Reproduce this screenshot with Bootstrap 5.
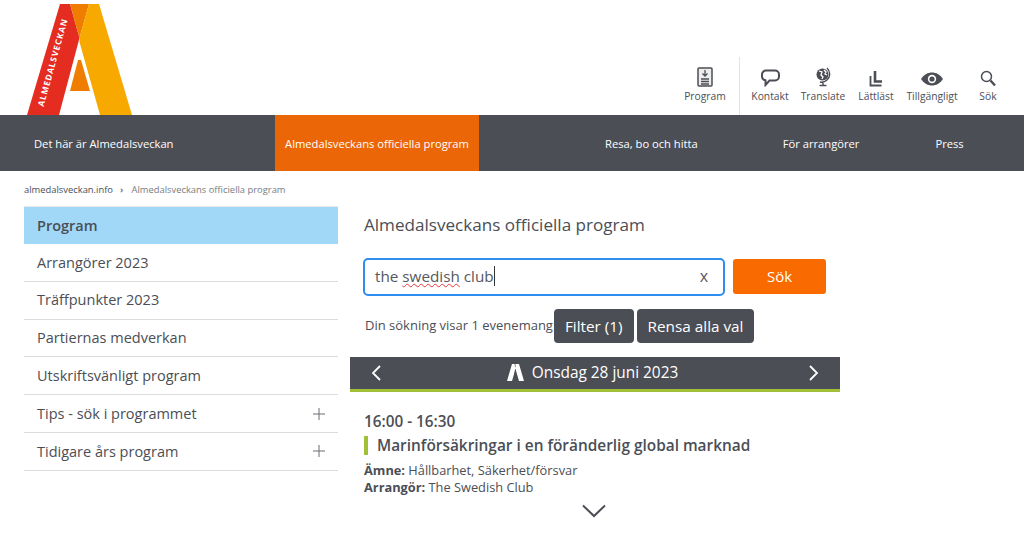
<!DOCTYPE html>
<html lang="sv">
<head>
<meta charset="utf-8">
<title>Almedalsveckans officiella program</title>
<link href="https://cdn.jsdelivr.net/npm/bootstrap@5.3.0/dist/css/bootstrap.min.css" rel="stylesheet">
<style>
html,body{height:554px;overflow:hidden}
body{font-family:"Open Sans",sans-serif;color:#4b4e55;background:#fff}
.site-top{height:115px}
.site-logo{margin-left:26px;margin-top:4px;width:108px;height:111px;display:block}
.tools{padding-right:27px;padding-top:57px}
.tool{font-size:10.3px;line-height:13px;color:#4b4e55;text-align:center;text-decoration:none;display:flex;flex-direction:column;align-items:center;justify-content:flex-end;padding-bottom:12px;white-space:nowrap}
.tool svg{margin-bottom:3px}
.t-prog{width:42px;margin-right:13px}
.t-sep{border-left:1px solid #e3e3e3;padding-left:11px}
.t-kont{width:38px;margin-right:11px}
.t-tran{width:46px;margin-right:11px}
.t-latt{width:38px;margin-right:11px}
.t-till{width:52px;margin-right:21px}
.t-sok{width:18px}
.mainnav{background:#4b4e55;height:56px}
.mainnav a{font-size:11.2px;color:#fff;text-decoration:none;display:flex;align-items:center;height:56px;padding-top:2px;white-space:nowrap}
.n1{width:275px;padding-left:34px}
.n2{width:204px;justify-content:center;background:#ea6607}
.n3{margin-left:126px}
.n4{margin-left:85px}
.n5{margin-left:76px}
.crumbs{font-size:9.4px;line-height:12px;padding:13px 0 0 24px;height:36px;color:#7a7c82}
.crumbs a{color:#4b4e55;text-decoration:none}
.crumbs b{font-weight:700;margin:0 8px 0 7px}
.side{width:314px;margin-left:24px;flex:none;margin-top:-1px}
.side-item{display:flex;justify-content:space-between;align-items:center;height:37.8px;padding:0 13px;font-size:14.5px;border-bottom:1px solid #dcdcdc;color:#4b4e55;text-decoration:none}
.side-item.on{background:#a1d8f7;font-weight:600;height:38px;border-bottom:0;border-top:1px solid #e8e8e8}
.content{width:490px;margin-left:12px;flex:none;margin-top:-1px}
.pad{padding-left:14px}
.ptitle{font-size:17.1px;line-height:22px;font-weight:400;margin:8px 0 22px;color:#4b4e55}
.searchbox{width:362px;height:38px;border:2px solid #2d8ef0;border-radius:5px;padding:0 10px;font-size:15.25px;line-height:33px;color:#55585e;display:flex;justify-content:space-between;margin-left:-1px}
.spell{text-decoration:underline wavy #e5353b 1px}
.caret-bar{border-right:1px solid #333}
.sx{font-size:16px;line-height:33px;padding-right:5px}
.btn-sok{width:93px;height:35px;background:#f96a00;color:#fff;font-size:15px;border:0;border-radius:3px;margin:0 0 1px 8px;padding:0}
.res{font-size:13px;margin:13px 0 14px 1px;height:34px;gap:3px}
.btn-dark2{background:#4b4e55;color:#fff;font-size:15.3px;height:34px;padding:0 11px;border:0;border-radius:4px}
.res .first{margin-left:-2px}
.datebar{height:35px;background:#4b4e55;border-bottom:3px solid #a2c037;color:#fff;font-size:15.4px;padding:0 21px}
.date-mid{margin-right:5px}
.ev-time{font-size:15.3px;font-weight:600;line-height:18px;margin-top:20px}
.ev-title{font-size:15.4px;font-weight:600;line-height:19px;border-left:4px solid #a2c037;padding-left:9px;margin:6px 0 7px;color:#4b4e55}
.ev-meta{font-size:12.8px;line-height:17px}
.ev-meta b{font-weight:700}
.more{display:block;margin:8px 0 0 218px}
</style>
</head>
<body>
<header class="site-top d-flex justify-content-between">
  <svg class="site-logo" viewBox="26 4 108 111" aria-label="Almedalsveckan">
    <polygon points="60,4 70,4 79.5,38 59,115 27,115" fill="#e42c21"/>
    <polygon points="70,4 89,4 79.5,38" fill="#ef7d00"/>
    <polygon points="89,4 99,4 132,115 100,115 79.5,42 79.5,38" fill="#f7a900"/>
    <polygon points="78,60 81,60 90,91 70,91" fill="#ef7d00"/>
    <text x="43.500" y="107" transform="rotate(-74.500 43.500 107)" font-family="Open Sans,sans-serif" font-weight="700" font-size="8.400" fill="#fff" textLength="90">ALMEDALSVECKAN</text>
  </svg>
  <nav class="tools d-flex align-items-stretch">
    <a class="tool t-prog" href="#">
      <svg width="16" height="20" viewBox="0 0 16 20" fill="none" stroke="#4b4e55" stroke-width="1.5"><rect x="1" y="1" width="14" height="18" rx="1" fill="#eceded"/><path d="M8 3v6M5.500 6.500 8 9l2.500-2.500M4 12h8M4 14.500h8M4 17h8" stroke-width="1.300"/></svg>
      Program</a>
    <div class="t-sep d-flex">
    <a class="tool t-kont" href="#">
      <svg width="19" height="18" viewBox="0 0 19 18" fill="none" stroke="#4b4e55" stroke-width="2"><path d="M5 1.500h9a4 4 0 0 1 4 4v2a4 4 0 0 1-4 4H8.500L4.500 16v-4.700A4 4 0 0 1 1 7.500v-2a4 4 0 0 1 4-4z"/></svg>
      Kontakt</a>
    <a class="tool t-tran" href="#">
      <svg width="16" height="20" viewBox="0 0 16 20" fill="none"><circle cx="7.500" cy="7.500" r="6" fill="#4b4e55"/><path d="M4 4l3 1-1 3 2 2-1 2M9 3l2 2-1 2 2 1" stroke="#fff" stroke-width="1.300"/><path d="M12 1a8 8 0 0 1 0 12 8 8 0 0 1-7 2M8 15v3M4.500 18.500h7" stroke="#4b4e55" stroke-width="1.400"/></svg>
      Translate</a>
    <a class="tool t-latt" href="#">
      <svg width="14" height="16" viewBox="0 0 14 16" fill="none" stroke="#4b4e55"><path d="M1.500 5v9.500h11" stroke-width="1.800"/><path d="M6 0v10.500h7" stroke-width="2.600"/></svg>
      Lättläst</a>
    <a class="tool t-till" href="#">
      <svg width="22" height="14" viewBox="0 0 22 14" class="mb-1"><path d="M0 7C3 2.500 7 .5 11 .5S19 2.500 22 7c-3 4.500-7 6.500-11 6.500S3 11.500 0 7z" fill="#4b4e55"/><circle cx="11" cy="7" r="4.200" fill="#fff"/><circle cx="11" cy="7" r="2.600" fill="#4b4e55"/></svg>
      Tillgängligt</a>
    <a class="tool t-sok" href="#">
      <svg width="16" height="17" viewBox="0 0 16 17" fill="none" stroke="#4b4e55"><circle cx="6.500" cy="6.500" r="5" stroke-width="1.500"/><path d="M10.500 10.500 15 15.500" stroke-width="2.400"/></svg>
      Sök</a>
    </div>
  </nav>
</header>
<nav class="mainnav d-flex">
  <a class="n1" href="#">Det här är Almedalsveckan</a>
  <a class="n2" href="#">Almedalsveckans officiella program</a>
  <a class="n3" href="#">Resa, bo och hitta</a>
  <a class="n4" href="#">För arrangörer</a>
  <a class="n5" href="#">Press</a>
</nav>
<div class="crumbs"><a href="#">almedalsveckan.info</a><b>›</b>Almedalsveckans officiella program</div>
<div class="d-flex">
  <aside class="side">
    <a class="side-item on" href="#">Program</a>
    <a class="side-item" href="#">Arrangörer 2023</a>
    <a class="side-item" href="#">Träffpunkter 2023</a>
    <a class="side-item" href="#">Partiernas medverkan</a>
    <a class="side-item" href="#">Utskriftsvänligt program</a>
    <a class="side-item" href="#">Tips - sök i programmet<svg width="12" height="12" viewBox="0 0 12 12" stroke="#6a6d73"><path d="M6 0v12M0 6h12"/></svg></a>
    <a class="side-item" href="#">Tidigare års program<svg width="12" height="12" viewBox="0 0 12 12" stroke="#6a6d73"><path d="M6 0v12M0 6h12"/></svg></a>
  </aside>
  <main class="content">
    <div class="pad">
      <h1 class="ptitle">Almedalsveckans officiella program</h1>
      <div class="d-flex align-items-center">
        <div class="searchbox"><span><span class="caret-bar">the <span class="spell">swedish</span> club</span></span><span class="sx">x</span></div>
        <button class="btn-sok" type="button">Sök</button>
      </div>
      <div class="res d-flex align-items-center">
        <span>Din sökning visar 1 evenemang</span>
        <button class="btn-dark2 first" type="button">Filter (1)</button>
        <button class="btn-dark2" type="button">Rensa alla val</button>
      </div>
    </div>
    <div class="datebar d-flex align-items-center justify-content-between">
      <svg width="11" height="16" viewBox="0 0 11 16" fill="none" stroke="#fff" stroke-width="1.800"><path d="M9 1 2 8l7 7"/></svg>
      <span class="date-mid d-flex align-items-center gap-2">
        <svg width="17" height="17" viewBox="0 0 17 17"><path d="M5 0h7l5 17h-5L8.500 5 5 17H0z" fill="#fff"/><path d="M8.500 3 8 0M8.500 5l-1 6" stroke="#4b4e55" stroke-width=".6"/></svg>
        Onsdag 28 juni 2023</span>
      <svg width="11" height="16" viewBox="0 0 11 16" fill="none" stroke="#fff" stroke-width="1.800"><path d="m2 1 7 7-7 7"/></svg>
    </div>
    <div class="pad">
      <div class="ev-time">16:00 - 16:30</div>
      <h2 class="ev-title">Marinförsäkringar i en föränderlig global marknad</h2>
      <div class="ev-meta"><b>Ämne:</b> Hållbarhet, Säkerhet/försvar<br><b>Arrangör:</b> The Swedish Club</div>
      <svg class="more" width="24" height="14" viewBox="0 0 24 14" fill="none" stroke="#4b4e55" stroke-width="2"><path d="m1 1.500 11 10.500L23 1.500"/></svg>
    </div>
  </main>
</div>
</body>
</html>
